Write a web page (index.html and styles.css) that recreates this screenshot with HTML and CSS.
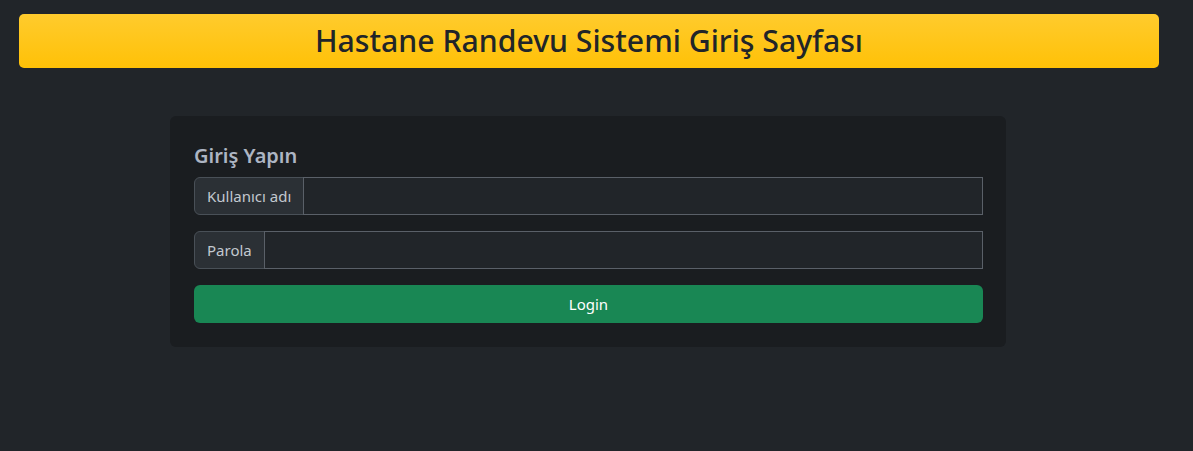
FILE: index.html
```html
<!DOCTYPE html>
<html lang="tr">
<head>
<meta charset="utf-8">
<title>Hastane Randevu Sistemi</title>
<link rel="stylesheet" href="styles.css">
</head>
<body>
<header class="banner">
  <h2 class="banner-title">Hastane Randevu Sistemi Giriş Sayfası</h2>
</header>
<main class="wrap">
  <form class="card">
    <h5 class="card-title">Giriş Yapın</h5>
    <div class="group">
      <span class="group-label">Kullanıcı adı</span>
      <input class="group-input" type="text">
    </div>
    <div class="group">
      <span class="group-label">Parola</span>
      <input class="group-input" type="password">
    </div>
    <button class="btn" type="button">Login</button>
  </form>
</main>
</body>
</html>
```
FILE: styles.css
```css
* { box-sizing: border-box; }
html, body { margin: 0; padding: 0; }
body {
  background: #212529;
  font-family: "Noto Sans", "Open Sans", sans-serif;
  color: #dee2e6;
  padding: 14px 34px 0 19px;
  min-height: 451px;
}
.banner {
  height: 54px;
  border-radius: 5px;
  background: linear-gradient(180deg, #ffcb2d 0%, #ffc107 100%);
  display: flex;
  align-items: center;
  justify-content: center;
}
.banner-title {
  margin: 0;
  font-size: 30.2px;
  font-weight: 500;
  color: #212529;
  line-height: 1.2;
}
.wrap {
  display: flex;
  padding-top: 48px;
  padding-left: 151px;
}
.card {
  width: 836px;
  background: #1a1d20;
  border-radius: 6px;
  padding: 25px 23px 24px 24px;
  display: flex;
  flex-direction: column;
}
.card-title {
  margin: 0 0 6px 0;
  font-size: 20px;
  font-weight: 600;
  color: #adb5c3;
  line-height: 30px;
}
.group {
  display: flex;
  height: 38px;
  margin-bottom: 16px;
}
.group-label {
  display: flex;
  align-items: center;
  padding: 0 12px;
  background: #2b3035;
  border: 1px solid #495057;
  border-radius: 6px 0 0 6px;
  color: #c2c8cf;
  font-size: 15px;
  white-space: nowrap;
}
.group-input {
  flex: 1;
  background: #212529;
  border: 1px solid #5a6068;
  margin-left: -1px;
  color: #dee2e6;
  font: inherit;
  outline: none;
}
.btn {
  height: 38px;
  background: #198754;
  border: none;
  border-radius: 6px;
  color: #fff;
  font-family: inherit;
  font-size: 15px;
  cursor: pointer;
}
```
